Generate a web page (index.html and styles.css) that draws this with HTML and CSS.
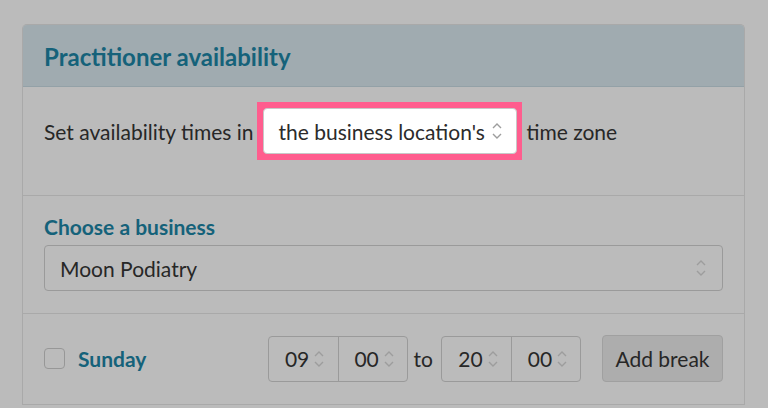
FILE: index.html
```html
<!DOCTYPE html>
<html lang="en">
<head>
<meta charset="utf-8">
<title>Practitioner availability</title>
<link rel="stylesheet" href="styles.css">
</head>
<body>
<div class="page">
  <section class="panel">
    <header class="panel-head">
      <h2 class="panel-title">Practitioner availability</h2>
    </header>
    <div class="section tz-section">
      <div class="tz-row">
        <span class="tz-text">Set availability times in</span>
        <span class="spotlight">
          <span class="select select-white">
            <span class="select-value">the business location's</span>
            <svg class="chev" width="12" height="20" viewBox="0 0 12 20"><path d="M2 7 L6 3 L10 7 M2 13 L6 17 L10 13" fill="none" stroke="currentColor" stroke-width="1.4"/></svg>
          </span>
        </span>
        <span class="tz-text">time zone</span>
      </div>
    </div>
    <div class="section biz-section">
      <label class="label">Choose a business</label>
      <div class="select select-wide">
        <span class="select-value">Moon Podiatry</span>
        <svg class="chev" width="12" height="20" viewBox="0 0 12 20"><path d="M2 7 L6 3 L10 7 M2 13 L6 17 L10 13" fill="none" stroke="currentColor" stroke-width="1.4"/></svg>
      </div>
    </div>
    <div class="section day-section">
      <div class="day-row">
        <span class="checkbox"></span>
        <span class="day-name">Sunday</span>
        <div class="times">
          <div class="time-group">
            <span class="time-cell">09<svg class="chev" width="12" height="20" viewBox="0 0 12 20"><path d="M2 7 L6 3 L10 7 M2 13 L6 17 L10 13" fill="none" stroke="currentColor" stroke-width="1.4"/></svg></span>
            <span class="time-cell">00<svg class="chev" width="12" height="20" viewBox="0 0 12 20"><path d="M2 7 L6 3 L10 7 M2 13 L6 17 L10 13" fill="none" stroke="currentColor" stroke-width="1.4"/></svg></span>
          </div>
          <span class="to">to</span>
          <div class="time-group">
            <span class="time-cell">20<svg class="chev" width="12" height="20" viewBox="0 0 12 20"><path d="M2 7 L6 3 L10 7 M2 13 L6 17 L10 13" fill="none" stroke="currentColor" stroke-width="1.4"/></svg></span>
            <span class="time-cell">00<svg class="chev" width="12" height="20" viewBox="0 0 12 20"><path d="M2 7 L6 3 L10 7 M2 13 L6 17 L10 13" fill="none" stroke="currentColor" stroke-width="1.4"/></svg></span>
          </div>
        </div>
        <button class="btn">Add break</button>
      </div>
    </div>
  </section>
</div>
</body>
</html>
```
FILE: styles.css
```css
html, body {
  margin: 0;
  padding: 0;
  background: #bbbbbb;
  height: 100%;
  overflow: hidden;
}
body {
  font-family: Lato, "Liberation Sans", sans-serif;
  color: #272727;
  font-size: 21px;
}
.page {
  padding: 24px 23px 0 22px;
}
.panel {
  border: 1px solid #a9a9a9;
  border-bottom: none;
  border-radius: 5px 5px 0 0;
  background: #bbbbbb;
}
.panel-head {
  height: 61px;
  background: #a0abb0;
  border-bottom: 1px solid #93a1a7;
  border-radius: 4px 4px 0 0;
  display: flex;
  align-items: center;
  padding-left: 21px;
}
.panel-title {
  margin: 0;
  font-size: 24px;
  font-weight: 700;
  color: #15627a;
  padding-top: 2px;
}
.section {
  border-bottom: 1px solid #a9a9a9;
  padding: 0 21px;
}
.tz-section {
  height: 109px;
  padding-top: 15px;
  box-sizing: border-box;
}
.tz-row {
  display: flex;
  align-items: center;
}
.tz-text {
  white-space: nowrap;
}
.spotlight {
  background: #ff5d8e;
  padding: 6px 5px 6px 6px;
  margin: 0 4px 0 4px;
  display: flex;
}
.select {
  display: flex;
  align-items: center;
  justify-content: space-between;
  box-sizing: border-box;
  height: 46px;
  border: 1px solid #9a9a9a;
  border-radius: 4px;
  padding: 0 13px 0 14px;
  white-space: nowrap;
}
.select-white {
  background: #ffffff;
  border-color: #c8c8c8;
  width: 254px;
  color: #2b2b2b;
}
.select-white .chev {
  color: #c4c4c4;
}
.select .chev,
.time-cell .chev {
  color: #9d9d9d;
}
.biz-section {
  height: 118px;
  padding-top: 19px;
  box-sizing: border-box;
}
.label {
  display: block;
  font-weight: 700;
  color: #15627a;
  line-height: 24px;
  margin-bottom: 6px;
}
.select-wide {
  width: 100%;
  padding-left: 15px;
  padding-right: 15px;
}
.day-section {
  height: 91px;
  padding-top: 21px;
  box-sizing: border-box;
}
.day-row {
  display: flex;
  align-items: center;
  height: 47px;
}
.checkbox {
  width: 21px;
  height: 21px;
  border: 1px solid #979797;
  border-radius: 4px;
  box-sizing: border-box;
  margin-right: 13px;
}
.day-name {
  font-weight: 700;
  color: #15627a;
}
.times {
  display: flex;
  align-items: center;
  margin-left: auto;
  margin-right: 21px;
}
.time-group {
  display: flex;
  height: 46px;
  border: 1px solid #9a9a9a;
  border-radius: 4px;
  box-sizing: border-box;
}
.time-cell {
  width: 69px;
  box-sizing: border-box;
  display: flex;
  align-items: center;
  justify-content: center;
  gap: 4px;
  padding-left: 4px;
}
.time-cell + .time-cell {
  border-left: 1px solid #9a9a9a;
}
.to {
  margin: 0 8px 0 6px;
}
.btn {
  font-family: inherit;
  font-size: 21px;
  color: #272727;
  background: #adadad;
  border: 1px solid #a0a0a0;
  border-radius: 4px;
  height: 47px;
  width: 121px;
  padding: 0;
}
```
